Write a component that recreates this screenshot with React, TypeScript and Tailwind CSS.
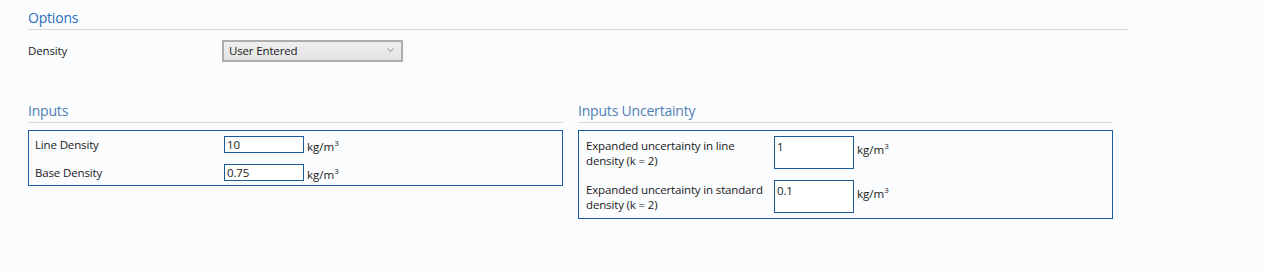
import type { ReactNode } from 'react'

const font = { fontFamily: '"Open Sans", "Noto Sans", sans-serif' }

function SectionHeader({ title, muted }: { title: string; muted?: boolean }) {
  return (
    <div className="border-b border-[#d8d8d8] pb-[1px]">
      <h2
        className={`text-[14px] leading-[20px] tracking-[-0.2px] ${muted ? 'text-[#4f7fb5]' : 'text-[#2a6ebb]'}`}
      >
        {title}
      </h2>
    </div>
  )
}

function Unit() {
  return (
    <span className="text-[11.5px] leading-[16px] text-[#1a1a1a]">
      kg/m<sup className="text-[8px] relative -top-[5px]">3</sup>
    </span>
  )
}

const txt = 'text-[11.5px] tracking-[-0.15px] text-[#1a1a1a]'

function InputRow({ label, value }: { label: string; value: string }) {
  return (
    <div className="flex items-center h-[17px]">
      <div className={`w-[189px] ${txt}`}>{label}</div>
      <div className={`w-[80px] h-[17px] border border-[#1d5c98] bg-white px-[2px] leading-[15px] ${txt}`}>
        {value}
      </div>
      <div className="ml-[3px]">
        <Unit />
      </div>
    </div>
  )
}

function UncertaintyRow({ label, value }: { label: ReactNode; value: string }) {
  return (
    <div className="flex items-start">
      <div className={`w-[188px] pt-[2px] pr-[6px] leading-[15px] ${txt}`}>{label}</div>
      <div className={`w-[80px] h-[33px] border border-[#1d5c98] bg-white px-[2px] pt-[2px] leading-[15px] ${txt}`}>
        {value}
      </div>
      <div className="ml-[3px]">
        <Unit />
      </div>
    </div>
  )
}

export default function App() {
  return (
    <div className="min-h-[271px] w-full bg-[#fbfcfe] pl-[28px] pt-[8px]" style={font}>
      <div className="w-[1100px]">
        <SectionHeader title="Options" />
        <div className="flex items-center mt-[10px]">
          <div className={`w-[194px] ${txt}`}>Density</div>
          <div className="flex items-center justify-between w-[181px] h-[22px] border-2 border-[#adadad] bg-gradient-to-b from-[#efefef] to-[#e3e3e3] pl-[5px] pr-[7px]">
            <span className={`leading-[16px] ${txt}`}>User Entered</span>
            <svg width="7" height="4" viewBox="0 0 7 4" className="mb-[2px]">
              <path d="M0.5 0.5 L3.5 3.5 L6.5 0.5" fill="none" stroke="#8a8a8a" strokeWidth="1" />
            </svg>
          </div>
        </div>
      </div>

      <div className="flex gap-[15px] mt-[39px] w-[1085px]">
        <div className="w-[535px]">
          <SectionHeader title="Inputs" muted />
          <div className="mt-[7px] border border-[#1a5fa3] px-[6px] pt-[5px] pb-[4px] flex flex-col gap-[11px]">
            <InputRow label="Line Density" value="10" />
            <InputRow label="Base Density" value="0.75" />
          </div>
        </div>
        <div className="w-[535px]">
          <SectionHeader title="Inputs Uncertainty" muted />
          <div className="mt-[7px] border border-[#1a5fa3] px-[7px] pt-[5px] pb-[5px] flex flex-col gap-[11px]">
            <UncertaintyRow label="Expanded uncertainty in line density (k = 2)" value="1" />
            <UncertaintyRow label="Expanded uncertainty in standard density (k = 2)" value="0.1" />
          </div>
        </div>
      </div>
    </div>
  )
}
